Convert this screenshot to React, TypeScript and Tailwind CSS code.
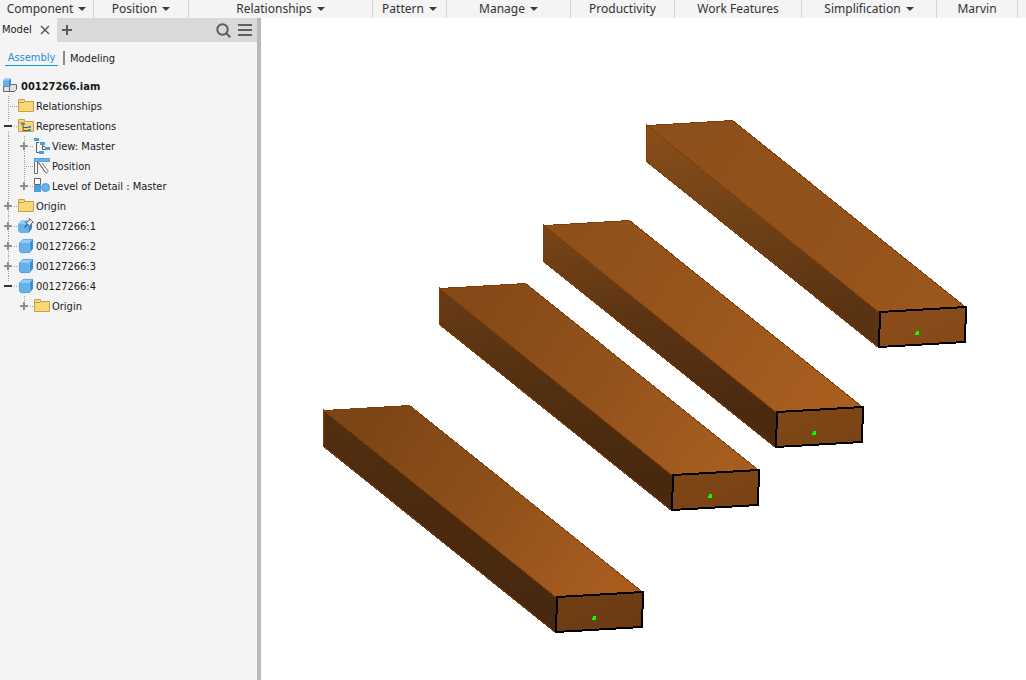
import React, { useState } from 'react'

type Panel = {
    label: string,
    menu?: boolean,
}

const panels: Panel[] = [
    { label: 'Component', menu: true },
    { label: 'Position', menu: true },
    { label: 'Relationships', menu: true },
    { label: 'Pattern', menu: true },
    { label: 'Manage', menu: true },
    { label: 'Productivity' },
    { label: 'Work Features' },
    { label: 'Simplification', menu: true },
    { label: 'Marvin' },
]

const RibbonBar = () => (
    <nav className="grid h-[18px] grid-cols-[94fr_95fr_184fr_74fr_124fr_104fr_127fr_135fr_81fr_8fr] bg-[#f4f4f4] font-['Noto_Sans','Open_Sans',sans-serif] text-[12px] leading-[18px] text-[#333]">
        {panels.map(panel => (
            <button key={panel.label} type="button" className="flex items-center justify-center gap-[5px] overflow-hidden border-r border-[#d4d4d4] whitespace-nowrap">
                {panel.label}
                {panel.menu && (
                    <svg width="8" height="4" viewBox="0 0 8 4" className="shrink-0" aria-hidden="true">
                        <path d="M0 0h8L4 4z" fill="#3c3c3c" />
                    </svg>
                )}
            </button>
        ))}
    </nav>
)

// ---- tree icons, all on a 16px grid ----

const Folder = () => (
    <>
        <path d="M.5 13.500V1.500h6v2h9v10z" fill="#f8d775" stroke="#c7a04a" />
        <path d="M1 4.500h5l1-1" fill="none" stroke="#c7a04a" />
    </>
)

const Cube = () => (
    <>
        <path d="M1 5l4-4h10l-3.500 4z" fill="#8fcbfa" />
        <path d="M11.500 5L15 1v9.500L11.500 15z" fill="#3c8fd0" />
        <path d="M1 5h10.500v10H3l-2-2z" fill="#64b2e8" />
        <path d="M1.400 13V5l4-3.600h9.200v9L11.300 14.600H3z" fill="none" stroke="#4793cf" strokeWidth=".6" />
    </>
)

const icons: Record<string, React.ReactNode> = {
    assembly: (
        <>
            <path d="M1.500 8.500h6v5h-6zM7.500 8.500l2-2h5v5l-2 2h-5z" fill="#e2e2e2" stroke="#666" />
            <path d="M1 2.500L3 .500h6v6l-2 2H1z" fill="#64b2e8" />
            <path d="M7 2.500l2-2v6l-2 2z" fill="#3c87c4" />
            <path d="M1 2.500l2-2h6l-2 2z" fill="#8fcbfa" />
        </>
    ),
    folder: <Folder />,
    representations: (
        <>
            <Folder />
            <path d="M5 7v5.500h5M5 9.500h5" fill="none" stroke="#555" />
            <path d="M3 5h4v2H3zM10 8h3v2h-3zM10 11h3v2h-3z" fill="#3f92d2" />
        </>
    ),
    view: (
        <>
            <path d="M5 4.500H2.500v10H5M8.500 6v5.500H11M8.500 8.500H11" fill="none" stroke="#5c5c5c" />
            <path d="M0 0h5v3H0zM6 4h5v3H6zM11 9h5v3h-5zM5 13h5v3H5z" fill="#4a9edb" />
        </>
    ),
    position: (
        <>
            <path d="M.5 4v11.500h3V4M5 5l6.500 9.500c1 1 3.300-.5 2.200-2L8 5" fill="#fafafa" stroke="#6b6b6b" />
            <path d="M4 4l7 10" fill="none" stroke="#6b6b6b" />
            <path d="M0 0h16v4H0z" fill="#62b4ea" />
            <path d="M.5.500h15v3H.500z" fill="none" stroke="#4b9ad4" strokeWidth=".6" />
        </>
    ),
    detail: (
        <>
            <path d="M.5.500h6v6h-6z" fill="#fafafa" stroke="#666" />
            <path d="M0 7h7v7H0z" fill="#4a9fe0" />
            <circle cx="11.500" cy="9.500" r="4" fill="#64b2e8" stroke="#4a98d4" />
        </>
    ),
    part: <Cube />,
    grounded: (
        <>
            <path d="M0 6l4-4h10v8l-3.500 5H2l-2-2z" fill="#64b2e8" />
            <path d="M0 6l4-4h10l-3.500 4z" fill="#8fcbfa" />
            <path d="M10.500 6L14 2v8.500L10.500 15z" fill="#3c8fd0" />
            <path d="M11.500.500l4 4-1.500.300-1.500 1.700.200 2.500-5.500-5 2.500.100 1.500-1.800z" fill="#f2f2f2" stroke="#555" strokeWidth=".9" />
            <path d="M9.500 6.500L6.500 9.500" fill="none" stroke="#555" strokeWidth="1.100" />
        </>
    ),
}

type GuideProps = {
    up?: boolean,
    down?: boolean,
    stub?: boolean,
}

// dotted connector lines of one tree cell
const Guide = ({ up, down, stub }: GuideProps) => (
    <svg width="18" height="20" viewBox="0 0 18 20" shapeRendering="crispEdges" fill="none" stroke="#a3a3a3" strokeDasharray="1 1" aria-hidden="true">
        {up && <path d="M8.500 0v10" />}
        {down && <path d="M8.500 10v10" />}
        {stub && <path d="M8 10.500h10" />}
    </svg>
)

type NodeData = {
    label: string,
    icon: string,
    depth: number,
    state?: 'open' | 'closed',
    last?: boolean,
    rail?: boolean,
}

const nodes: NodeData[] = [
    { label: 'Relationships', icon: 'folder', depth: 0 },
    { label: 'Representations', icon: 'representations', depth: 0, state: 'open' },
    { label: 'View: Master', icon: 'view', depth: 1, state: 'closed', rail: true },
    { label: 'Position', icon: 'position', depth: 1, rail: true },
    { label: 'Level of Detail : Master', icon: 'detail', depth: 1, state: 'closed', last: true, rail: true },
    { label: 'Origin', icon: 'folder', depth: 0, state: 'closed' },
    { label: '00127266:1', icon: 'grounded', depth: 0, state: 'closed' },
    { label: '00127266:2', icon: 'part', depth: 0, state: 'closed' },
    { label: '00127266:3', icon: 'part', depth: 0, state: 'closed' },
    { label: '00127266:4', icon: 'part', depth: 0, state: 'open', last: true },
    { label: 'Origin', icon: 'folder', depth: 1, state: 'closed', last: true },
]

const TreeIcon = ({ name }: { name: string }) => (
    <svg width="16" height="16" viewBox="0 0 16 16" className="shrink-0" aria-hidden="true">
        {icons[name]}
    </svg>
)

const TreeRow = ({ node }: { node: NodeData }) => (
    <li className="flex h-5 items-center">
        {node.depth === 1 && (
            <span className="w-4 shrink-0">{node.rail && <Guide up down />}</span>
        )}
        {node.state ? (
            <button type="button" aria-label={`Toggle ${node.label}`} className="w-[18px] shrink-0">
                <svg width="18" height="20" viewBox="0 0 18 20" shapeRendering="crispEdges" aria-hidden="true">
                    <path d={node.last ? 'M8.500 0v5' : 'M8.500 0v5M8.500 15v5'} stroke="#a3a3a3" strokeDasharray="1 1" />
                    <path d="M14 10.500h4" stroke="#a3a3a3" strokeDasharray="1 1" />
                    {node.state === 'open'
                        ? <path d="M4 9h8v2H4z" fill="#333" />
                        : <path d="M4 9h8v2H4zM7 6h2v8H7z" fill="#8e8e8e" />}
                </svg>
            </button>
        ) : (
            <span className="w-[18px] shrink-0"><Guide up down stub /></span>
        )}
        <TreeIcon name={node.icon} />
        <span className="pt-[2px] pl-[2px] whitespace-nowrap">{node.label}</span>
    </li>
)

const ModelBrowser = () => {
    const [tab, setTab] = useState('Assembly')

    return (
        <aside className="w-[261px] shrink-0 border-r-4 border-[#bababa] bg-[#f4f4f4] font-['DejaVu_Sans_Condensed','DejaVu_Sans',sans-serif] text-[11px] text-[#1a1a1a]">
            <div className="flex h-6 items-center bg-[#d9d9d9]">
                <div className="flex h-full w-[57px] items-center justify-between bg-[#f4f4f4] pr-[7px] pl-[2px]">
                    <span>Model</span>
                    <button type="button" aria-label="Close Model">
                        <svg width="10" height="10" viewBox="0 0 10 10">
                            <path d="M1 1l8 8M9 1L1 9" stroke="#5a5a5a" strokeWidth="1.500" />
                        </svg>
                    </button>
                </div>
                <button type="button" aria-label="Add panel" className="ml-[5px]">
                    <svg width="10" height="10" viewBox="0 0 10 10">
                        <path d="M4 0h2v4h4v2H6v4H4V6H0V4h4z" fill="#5a5a5a" />
                    </svg>
                </button>
                <button type="button" aria-label="Search" className="ml-auto">
                    <svg width="15" height="15" viewBox="0 0 15 15" fill="none" stroke="#5f5f5f" strokeWidth="2">
                        <circle cx="6.500" cy="6.500" r="5.200" />
                        <path d="M10.300 10.300l4 4" />
                    </svg>
                </button>
                <button type="button" aria-label="Browser menu" className="mr-[5px] ml-[7px]">
                    <svg width="14" height="12" viewBox="0 0 14 12">
                        <path d="M0 0h14v2H0zM0 5h14v2H0zM0 10h14v2H0z" fill="#5f5f5f" />
                    </svg>
                </button>
            </div>

            <div className="flex h-[34px] items-center pb-[2px] pl-[5px]">
                {['Assembly', 'Modeling'].map((name, i) => (
                    <React.Fragment key={name}>
                        {i > 0 && <span className="mx-[5px] h-[14px] w-[2px] bg-[#8a8a8a]" />}
                        <button
                            type="button"
                            onClick={() => setTab(name)}
                            className={tab === name
                                ? 'h-4 w-[53px] border-b border-[#1b93d8] leading-[15px] text-[#1b93d8]'
                                : 'h-4 leading-[15px]'}
                        >
                            {name}
                        </button>
                    </React.Fragment>
                ))}
            </div>

            <div className="flex h-5 items-center gap-[3px] pl-[2px] font-bold">
                <TreeIcon name="assembly" />
                <span className="pt-[2px]">00127266.iam</span>
            </div>
            <ul>
                {nodes.map((node, i) => <TreeRow key={i} node={node} />)}
            </ul>
        </aside>
    )
}

type Beam = {
    id: string,
    x: number,
    y: number,
    top: string[],
    side: string[],
    face: string[],
}

const beams: Beam[] = [
    { id: 'b1', x: 385, y: 102, top: ['#8e501a', '#91511b', '#9b571c'], side: ['#8a4e1a', '#6f4117', '#5a3312'], face: ['#8b4d1a', '#84491a'] },
    { id: 'b2', x: 282, y: 202, top: ['#8f501a', '#9a561c', '#a95e1f'], side: ['#784517', '#5c3413', '#4b2a10'], face: ['#824818', '#784315'] },
    { id: 'b3', x: 178, y: 265, top: ['#854a18', '#93521b', '#a75d1f'], side: ['#693b15', '#53300f', '#48290e'], face: ['#804717', '#774215'] },
    { id: 'b4', x: 62, y: 387, top: ['#7c4516', '#8f501a', '#a85d1f'], side: ['#532f11', '#4b2a0f', '#48280e'], face: ['#734015', '#6a3913'] },
]

const Viewport = () => (
    <main className="min-w-0 flex-1 overflow-hidden bg-white">
        <svg viewBox="0 0 765 662" preserveAspectRatio="xMinYMin meet" className="block w-full" role="img" aria-label="Four beams">
            {beams.map(beam => (
                <g key={beam.id} transform={`translate(${beam.x} ${beam.y})`} shapeRendering="crispEdges">
                    <defs>
                        <linearGradient id={`${beam.id}-top`} gradientUnits="userSpaceOnUse" x1="40" y1="20" x2="280" y2="190">
                            {beam.top.map((c, i) => <stop key={c} offset={i / 2} stopColor={c} />)}
                        </linearGradient>
                        <linearGradient id={`${beam.id}-side`} gradientUnits="userSpaceOnUse" x1="40" y1="0" x2="80" y2="210">
                            {beam.side.map((c, i) => <stop key={c} offset={i / 2} stopColor={c} />)}
                        </linearGradient>
                        <linearGradient id={`${beam.id}-face`} x1="0" y1="0" x2="1" y2="1">
                            {beam.face.map((c, i) => <stop key={c} offset={i} stopColor={c} />)}
                        </linearGradient>
                    </defs>
                    <path d="M1 5.500L86.500 .500L319.500 187L234 193z" fill={`url(#${beam.id}-top)`} stroke="#7f3f08" />
                    <path d="M1 5.500L234 193L233 228L.500 41.500z" fill={`url(#${beam.id}-side)`} stroke="#7f3f08" />
                    <path d="M234 192L320 187L319 222L233 227z" fill={`url(#${beam.id}-face)`} stroke="#000" strokeWidth="2" />
                    <path d="M270 211h3v4h-4v-2h1z" fill="#00ff00" />
                </g>
            ))}
        </svg>
    </main>
)

const App = () => (
    <div className="flex min-h-screen flex-col bg-white">
        <RibbonBar />
        <div className="flex flex-1">
            <ModelBrowser />
            <Viewport />
        </div>
    </div>
)

export default App
